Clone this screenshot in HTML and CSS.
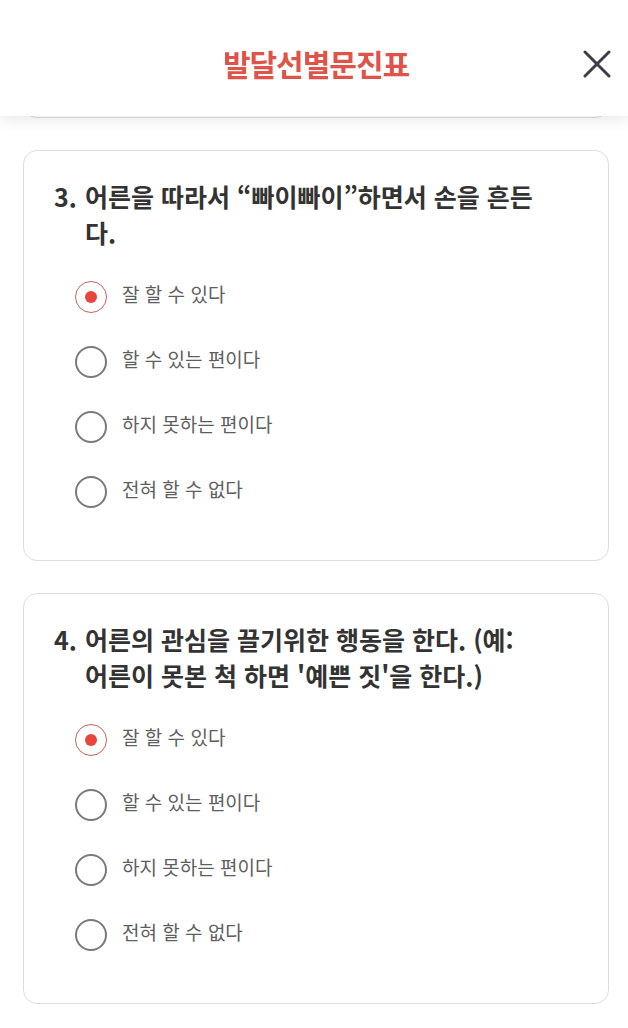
FILE: index.html
```html
<!DOCTYPE html>
<html lang="ko">
<head>
<meta charset="utf-8">
<title>발달선별문진표</title>
<link rel="stylesheet" href="styles.css">
</head>
<body>
<header class="topbar">
  <h1 class="title">발달선별문진표</h1>
  <button class="close" aria-label="닫기">
    <svg width="28" height="28" viewBox="0 0 28 28"><path d="M2 2 L26 26 M26 2 L2 26" stroke="#3c3f47" stroke-width="3" stroke-linecap="round" fill="none"/></svg>
  </button>
</header>
<main class="list">
  <div class="card stub"></div>
  <section class="card">
    <h2 class="question"><span class="qnum">3.</span><span class="qtext">어른을 따라서 “빠이빠이”하면서 손을 흔든다.</span></h2>
    <ul class="options">
      <li class="option"><span class="radio checked"></span><span class="label">잘 할 수 있다</span></li>
      <li class="option"><span class="radio"></span><span class="label">할 수 있는 편이다</span></li>
      <li class="option"><span class="radio"></span><span class="label">하지 못하는 편이다</span></li>
      <li class="option"><span class="radio"></span><span class="label">전혀 할 수 없다</span></li>
    </ul>
  </section>
  <section class="card">
    <h2 class="question"><span class="qnum">4.</span><span class="qtext">어른의 관심을 끌기위한 행동을 한다. (예: 어른이 못본 척 하면 '예쁜 짓'을 한다.)</span></h2>
    <ul class="options">
      <li class="option"><span class="radio checked"></span><span class="label">잘 할 수 있다</span></li>
      <li class="option"><span class="radio"></span><span class="label">할 수 있는 편이다</span></li>
      <li class="option"><span class="radio"></span><span class="label">하지 못하는 편이다</span></li>
      <li class="option"><span class="radio"></span><span class="label">전혀 할 수 없다</span></li>
    </ul>
  </section>
</main>
</body>
</html>
```

FILE: styles.css
```css
* { box-sizing: border-box; }
html, body {
  margin: 0;
  padding: 0;
  background: #ffffff;
  font-family: "Noto Sans CJK KR", "Noto Sans", sans-serif;
}
.topbar {
  position: fixed;
  top: 0;
  left: 0;
  right: 0;
  height: 116px;
  background: #ffffff;
  box-shadow: 0 4px 14px rgba(0, 0, 0, 0.09);
  display: flex;
  align-items: center;
  justify-content: center;
  z-index: 10;
}
.title {
  margin: 0;
  font-size: 30px;
  font-weight: 700;
  letter-spacing: -1px;
  color: #df5349;
  line-height: 1;
  padding-left: 4px;
  position: relative;
  top: 5px;
}
.close {
  position: absolute;
  right: 17px;
  top: 50px;
  width: 28px;
  height: 28px;
  padding: 0;
  border: 0;
  background: none;
}
.close svg { display: block; }
.list {
  display: flex;
  flex-direction: column;
  gap: 32px;
  padding: 0 19px 40px 23px;
}
.card {
  border: 1px solid #dedede;
  border-radius: 14px;
  padding: 27px 30px 36px 30px;
  background: #fff;
}
.card.stub {
  height: 118px;
  padding: 0;
  border-top: 0;
  border-radius: 0 0 14px 14px;
}
.question {
  margin: 0;
  display: flex;
  font-size: 25px;
  font-weight: 700;
  line-height: 36px;
  color: #333333;
}
.qnum {
  flex: none;
  width: 31px;
}
.qtext {
  max-width: 450px;
}
.options {
  list-style: none;
  margin: 14px 0 0 0;
  padding: 0 0 0 21px;
}
.option {
  height: 65px;
  display: flex;
  align-items: center;
  gap: 15px;
}
.radio {
  flex: none;
  width: 32px;
  height: 32px;
  border-radius: 50%;
  border: 2px solid #7a7a7a;
  display: flex;
  align-items: center;
  justify-content: center;
}
.radio.checked {
  border: 1.5px solid #c8615b;
}
.radio.checked::after {
  content: "";
  width: 12px;
  height: 12px;
  border-radius: 50%;
  background: #e8463c;
}
.label {
  font-size: 19px;
  color: #5e5e5e;
  line-height: 1;
  position: relative;
  top: -3px;
}
```
